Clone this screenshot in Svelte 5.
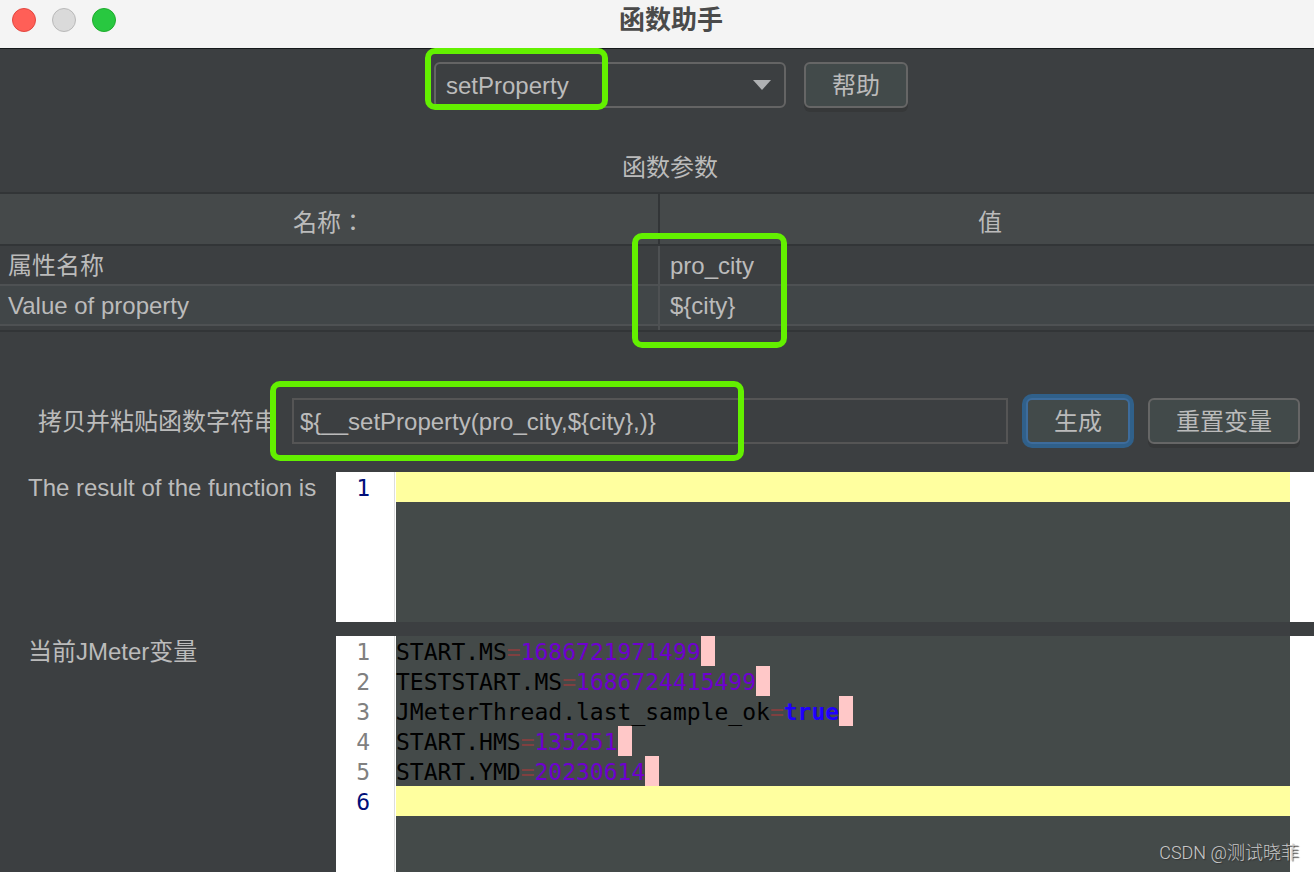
<script>
  let selected = 'setProperty';
  let functionString = '${__setProperty(pro_city,${city},)}';

  const functions = ['setProperty', 'property', 'P', 'time', 'Random'];

  const params = [
    { name: '属性名称', value: 'pro_city' },
    { name: 'Value of property', value: '${city}' }
  ];

  const resultLines = [{}];

  const variableLines = [
    { key: 'START.MS', value: '1686721971499', type: 'number' },
    { key: 'TESTSTART.MS', value: '1686724415499', type: 'number' },
    { key: 'JMeterThread.last_sample_ok', value: 'true', type: 'boolean' },
    { key: 'START.HMS', value: '135251', type: 'number' },
    { key: 'START.YMD', value: '20230614', type: 'number' },
    {}
  ];

  const editors = [
    { id: 'result', label: 'The result of the function is', lines: resultLines },
    { id: 'variables', label: '当前JMeter变量', lines: variableLines }
  ];
</script>

<div class="window">
  <header class="titlebar">
    <div class="lights">
      <button class="light close" aria-label="Close"></button>
      <button class="light minimize" aria-label="Minimize"></button>
      <button class="light zoom" aria-label="Zoom"></button>
    </div>
    <h1>函数助手</h1>
  </header>

  <main>
    <div class="chooser">
      <div class="select-wrap">
        <select bind:value={selected} aria-label="函数">
          {#each functions as fn}
            <option value={fn}>{fn}</option>
          {/each}
        </select>
        <svg class="arrow" width="18" height="10" viewBox="0 0 18 10">
          <path d="M0 0H18L9 10Z" fill="#afb1b3" />
        </svg>
        <span class="mark mark-function"></span>
      </div>
      <button class="btn">帮助</button>
    </div>

    <h2>函数参数</h2>

    <div class="table-wrap">
      <table>
        <thead>
          <tr><th>名称：</th><th>值</th></tr>
        </thead>
        <tbody>
          {#each params as param}
            <tr><td>{param.name}</td><td>{param.value}</td></tr>
          {/each}
          <tr class="rest"><td></td><td></td></tr>
        </tbody>
      </table>
      <span class="mark mark-values"></span>
    </div>

    <div class="generate">
      <label for="function-string">拷贝并粘贴函数字符串</label>
      <div class="field">
        <input id="function-string" type="text" bind:value={functionString} />
        <span class="mark mark-string"></span>
      </div>
      <button class="btn default">生成</button>
      <button class="btn">重置变量</button>
    </div>

    {#each editors as editor}
      <section class="pane {editor.id}">
        <h3>{editor.label}</h3>
        <div class="editor">
          {#each editor.lines as line, i}
            <div class="line" class:current={i === editor.lines.length - 1}>
              <span class="gutter">{i + 1}</span>
              <code>{#if line.key}{line.key}<span class="equals">=</span><span class={line.type}>{line.value}</span><span class="eol"></span>{/if}</code>
            </div>
          {/each}
        </div>
      </section>
    {/each}
  </main>

  <div class="watermark">CSDN @测试晓菲</div>
</div>

<style>
  :global(body) {
    margin: 0;
    background: #3c3f41;
  }

  .window {
    position: relative;
    display: flex;
    flex-direction: column;
    height: 100vh;
    overflow: hidden;
    box-sizing: border-box;
    background: #3c3f41;
    color: #bbbbbb;
    font-family: "Liberation Sans", "Noto Sans CJK SC", sans-serif;
    font-size: 24px;
    line-height: 32px;
  }

  .titlebar {
    display: flex;
    align-items: center;
    height: 40px;
    padding: 0 12px 8px;
    background: #f4f4f4;
    border-bottom: 1px solid #15191a;
  }

  .lights {
    display: flex;
    gap: 16px;
    width: 104px;
  }

  .light {
    width: 24px;
    height: 24px;
    padding: 0;
    border: 1px solid;
    border-radius: 50%;
  }

  .close {
    background: #ff5f57;
    border-color: #e2463f;
  }

  .minimize {
    background: #dadada;
    border-color: #b9b9b9;
  }

  .zoom {
    background: #28c840;
    border-color: #1eac2c;
  }

  h1, h2, h3 {
    margin: 0;
    font-weight: normal;
    font-size: 24px;
  }

  h1 {
    flex: 1;
    padding-right: 76px;
    text-align: center;
    font-size: 26px;
    font-weight: bold;
    color: #4a4a4a;
  }

  main {
    flex: 1;
    display: flex;
    flex-direction: column;
    min-height: 0;
  }

  .chooser {
    display: flex;
    justify-content: center;
    gap: 18px;
    padding: 13px 0 0 28px;
  }

  .select-wrap {
    position: relative;
    width: 352px;
  }

  select {
    appearance: none;
    width: 100%;
    height: 46px;
    padding: 2px 40px 0 10px;
    border: 2px solid #646464;
    border-radius: 6px;
    background: #3c3f41;
    color: inherit;
    font: inherit;
  }

  .arrow {
    position: absolute;
    right: 15px;
    top: 18px;
    pointer-events: none;
  }

  .btn {
    height: 46px;
    padding: 2px 26px 0;
    border: 2px solid #666666;
    border-radius: 6px;
    background: #424a4a;
    box-shadow: 0 4px 0 #363839;
    color: inherit;
    font: inherit;
    white-space: nowrap;
  }

  .default {
    border-color: #3d6c9c;
    box-shadow: 0 0 0 4px #30608a;
  }

  h2 {
    padding: 44px 0 8px 26px;
    text-align: center;
  }

  .table-wrap {
    position: relative;
    border-top: 2px solid #323537;
    border-bottom: 2px solid #323537;
  }

  table {
    width: calc(100% + 6px);
    table-layout: fixed;
    border-collapse: separate;
    border-spacing: 0;
  }

  th {
    height: 46px;
    padding: 4px 0 0;
    border-bottom: 2px solid #323537;
    background: #45494a;
    font-family: "Noto Sans CJK TC", sans-serif;
    font-weight: normal;
    text-spacing-trim: space-all;
  }

  th:first-child {
    border-right: 2px solid #323537;
  }

  td {
    height: 36px;
    padding: 2px 8px 0;
    border-bottom: 2px solid #4e5153;
  }

  td:first-child {
    border-right: 2px solid #4e5153;
  }

  td:last-child {
    padding-left: 10px;
  }

  tr:nth-child(2) td {
    background: #414648;
  }

  .rest td {
    height: 2px;
    border-bottom: 0;
  }

  .generate {
    display: flex;
    align-items: center;
    gap: 18px;
    padding: 66px 14px 28px 38px;
  }

  .generate label {
    margin-right: -4px;
    padding-top: 2px;
    white-space: nowrap;
  }

  .field {
    position: relative;
    flex: 1;
  }

  input {
    display: block;
    box-sizing: border-box;
    width: 100%;
    height: 46px;
    padding: 2px 6px 0;
    border: 2px solid #555555;
    background: #3c3f41;
    color: inherit;
    font: inherit;
  }

  /* green highlight frames drawn over the controls */
  .mark {
    position: absolute;
    box-sizing: border-box;
    border: 6px solid #63f000;
    border-radius: 10px;
    pointer-events: none;
  }

  .mark-function {
    left: -9px;
    top: -14px;
    width: 183px;
    height: 62px;
  }

  .mark-values {
    left: calc(50% - 25px);
    top: 39px;
    width: 155px;
    height: 115px;
  }

  .mark-string {
    left: -22px;
    top: -17px;
    width: 474px;
    height: 80px;
  }

  .pane {
    display: flex;
  }

  .result {
    height: 150px;
    margin-bottom: 14px;
  }

  .variables {
    flex: 1;
  }

  h3 {
    width: 308px;
    padding-left: 28px;
    white-space: nowrap;
  }

  .editor {
    flex: 1;
    border-right: 24px solid #ffffff;
    background: linear-gradient(to right, #ffffff 58px, #dddddd 58px, #dddddd 59px, #ffffff 59px, #ffffff 60px, #444a49 60px);
    font-family: "DejaVu Sans Mono", monospace;
    font-size: 23px;
  }

  .line {
    display: flex;
    height: 30px;
  }

  .gutter {
    width: 34px;
    padding-right: 26px;
    text-align: right;
    color: #808080;
  }

  code {
    flex: 1;
    display: flex;
    font: inherit;
    color: #000000;
  }

  .current .gutter {
    color: #000f7a;
  }

  .current code {
    background: #ffff9f;
  }

  .equals {
    color: #804040;
  }

  .number {
    color: #6f00cf;
  }

  .boolean {
    color: #1f00ff;
    font-weight: bold;
  }

  .eol {
    width: 14px;
    background: #ffc8c8;
  }

  .watermark {
    position: absolute;
    right: 15px;
    bottom: 3px;
    font-family: Roboto, "Noto Sans CJK SC", sans-serif;
    font-size: 18px;
    font-weight: 300;
    color: #c8c8c8;
    text-shadow: 1px 1px 1px #333333;
  }
</style>
